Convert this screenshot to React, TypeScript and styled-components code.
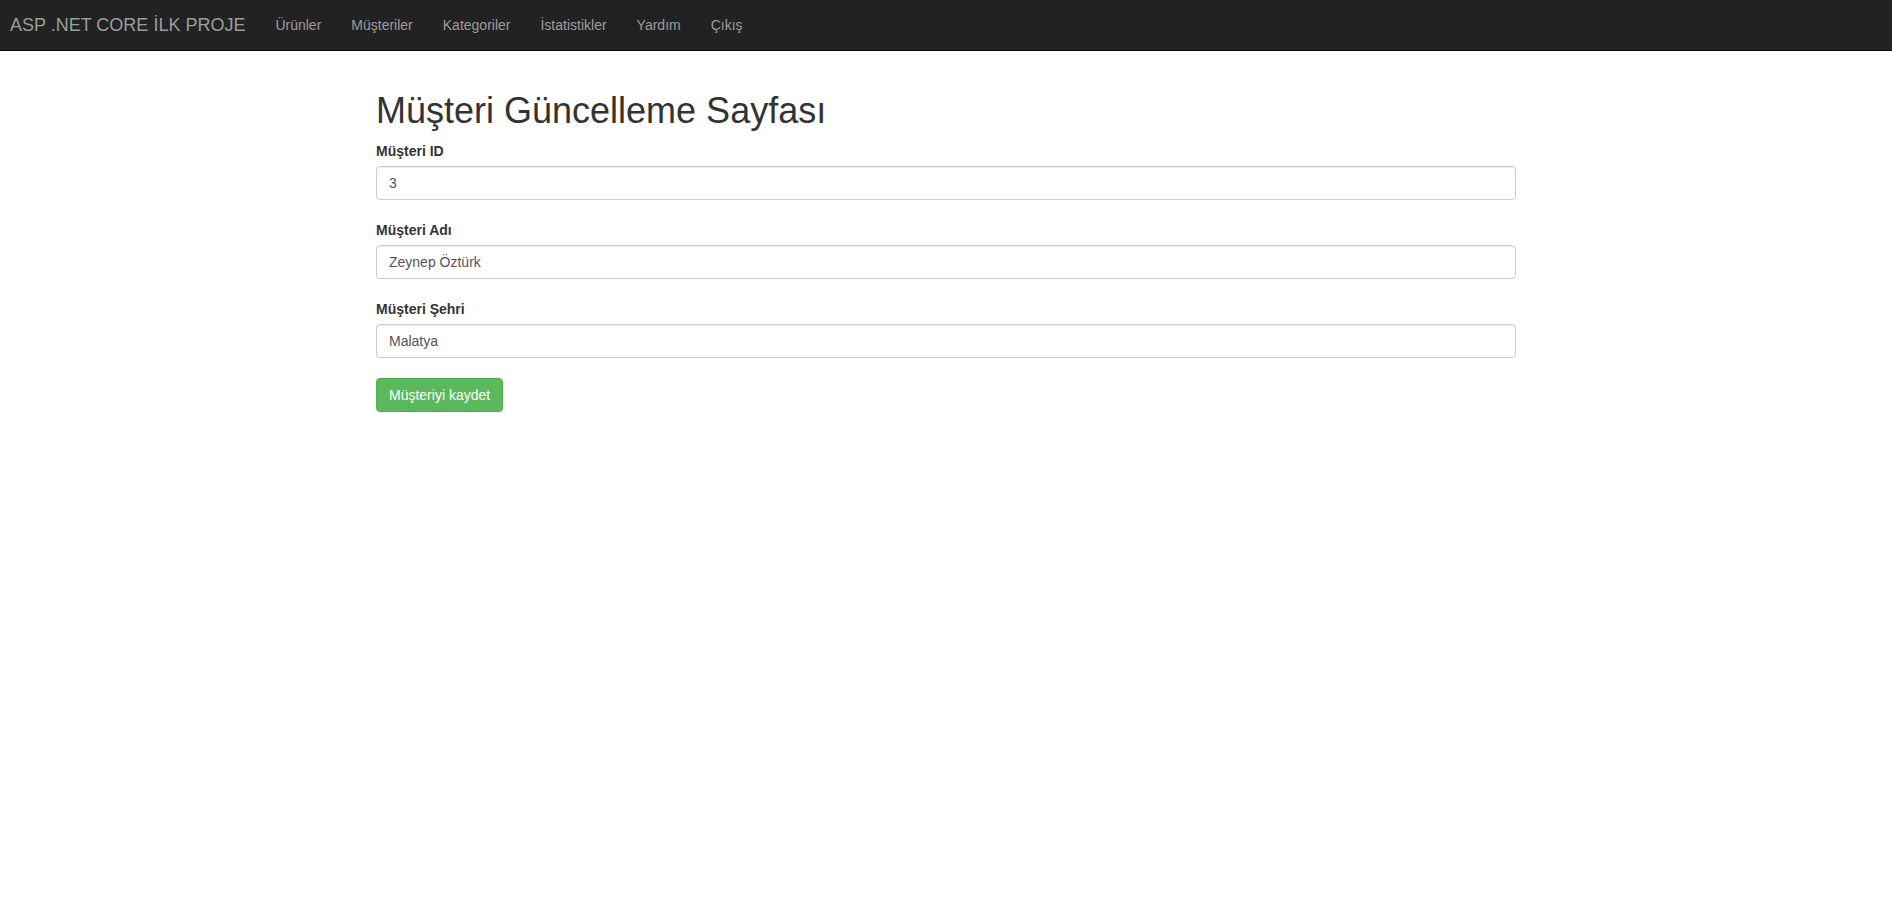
import React from 'react';
import styled, { createGlobalStyle } from 'styled-components';

const GlobalStyle = createGlobalStyle`
  html, body {
    margin: 0;
    padding: 0;
    background: #fff;
  }
  body {
    font-family: "Liberation Sans", Arial, Helvetica, sans-serif;
    font-size: 14px;
    line-height: 1.42857143;
    color: #333;
  }
  * {
    box-sizing: border-box;
  }
`;

const Navbar = styled.nav`
  display: flex;
  align-items: stretch;
  height: 51px;
  background: #222;
  border-bottom: 1px solid #080808;
`;

const Brand = styled.a`
  display: block;
  height: 50px;
  padding: 15px 15px 15px 10px;
  font-size: 18px;
  line-height: 20px;
  color: #9d9d9d;
  text-decoration: none;
  cursor: pointer;
`;

const NavList = styled.ul`
  display: flex;
  margin: 0;
  padding: 0;
  list-style: none;
`;

const NavLink = styled.a`
  display: block;
  padding: 15px;
  line-height: 20px;
  color: #9d9d9d;
  text-decoration: none;
  cursor: pointer;
`;

const Container = styled.div`
  width: 1170px;
  margin: 0 auto;
  padding: 0 15px;
`;

const Title = styled.h1`
  margin: 40px 0 10px;
  font-size: 36px;
  font-weight: 500;
  line-height: 1.1;
  color: #333;
`;

const FormGroup = styled.div`
  margin-bottom: 20px;
`;

const Label = styled.label`
  display: inline-block;
  margin-bottom: 5px;
  font-weight: bold;
`;

const Input = styled.input`
  display: block;
  width: 100%;
  height: 34px;
  padding: 6px 12px;
  font-family: inherit;
  font-size: 14px;
  line-height: 1.42857143;
  color: #555;
  background: #fff;
  border: 1px solid #ccc;
  border-radius: 4px;
  box-shadow: inset 0 1px 1px rgba(0, 0, 0, 0.075);
  outline: none;

  &:focus {
    border-color: #66afe9;
    box-shadow: inset 0 1px 1px rgba(0, 0, 0, 0.075), 0 0 8px rgba(102, 175, 233, 0.6);
  }
`;

const SubmitButton = styled.button`
  display: inline-block;
  padding: 6px 12px;
  font-family: inherit;
  font-size: 14px;
  line-height: 1.42857143;
  color: #fff;
  background: #5cb85c;
  border: 1px solid #4cae4c;
  border-radius: 4px;
  cursor: pointer;
`;

const menu = ['Ürünler', 'Müşteriler', 'Kategoriler', 'İstatistikler', 'Yardım', 'Çıkış'];

const fields = [
  { id: 'id', label: 'Müşteri ID', value: '3' },
  { id: 'ad', label: 'Müşteri Adı', value: 'Zeynep Öztürk' },
  { id: 'sehir', label: 'Müşteri Şehri', value: 'Malatya' },
];

const App: React.FC = () => {
  return (
    <>
      <GlobalStyle />
      <Navbar>
        <Brand>ASP .NET CORE İLK PROJE</Brand>
        <NavList>
          {menu.map(item => (
            <li key={item}>
              <NavLink>{item}</NavLink>
            </li>
          ))}
        </NavList>
      </Navbar>
      <Container>
        <Title>Müşteri Güncelleme Sayfası</Title>
        <form onSubmit={e => e.preventDefault()}>
          {fields.map(field => (
            <FormGroup key={field.id}>
              <Label htmlFor={field.id}>{field.label}</Label>
              <Input id={field.id} type="text" defaultValue={field.value} />
            </FormGroup>
          ))}
          <SubmitButton type="submit">Müşteriyi kaydet</SubmitButton>
        </form>
      </Container>
    </>
  );
};

export default App;
